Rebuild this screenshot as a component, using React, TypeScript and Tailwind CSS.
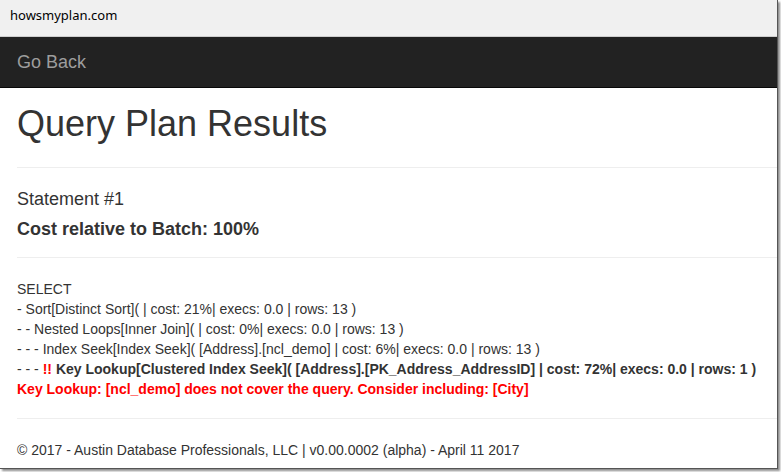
const rows = [
  "- Sort[Distinct Sort]( | cost: 21%| execs: 0.0 | rows: 13 )",
  "- - Nested Loops[Inner Join]( | cost: 0%| execs: 0.0 | rows: 13 )",
  "- - - Index Seek[Index Seek]( [Address].[ncl_demo] | cost: 6%| execs: 0.0 | rows: 13 )",
];

export default function App() {
  return (
    <div className="w-[781px] h-[472px] bg-white overflow-hidden">
      {/* page, with the screenshot drop shadow on right and bottom */}
      <div className="w-[778px] h-[469px] bg-white flex flex-col overflow-hidden border-r border-b border-[#555] shadow-[2px_2px_2px_rgba(0,0,0,0.45)] font-['Liberation_Sans',Arial,sans-serif] text-[#333]">
        {/* Address bar */}
        <div className="h-[37px] shrink-0 bg-[#f0f0f0] border-b border-[#cfcfcf] flex items-center pl-[10px] pb-[5px]">
          <span className="text-[13px] text-black font-['Noto_Sans','Open_Sans',sans-serif]">howsmyplan.com</span>
        </div>

        {/* Navbar */}
        <nav className="h-[51px] shrink-0 bg-[#222] border-b border-[#080808] flex items-center pl-[17px]">
          <span className="text-[18px] text-[#9d9d9d] leading-none">Go Back</span>
        </nav>

        {/* Body */}
        <main className="pl-[17px] flex flex-col">
          <h1 className="text-[36px] leading-[40px] mt-[16px] mb-[23px] font-normal text-[#333]">Query Plan Results</h1>
          <hr className="border-t border-[#eee]" />

          <h4 className="text-[18px] leading-[20px] mt-[21px] text-[#333]">Statement #1</h4>
          <p className="text-[18px] leading-[20px] mt-[10px] font-bold">Cost relative to Batch: 100%</p>
          <hr className="border-t border-[#eee] mt-[18px]" />

          <div className="text-[14px] leading-[20px] mt-[21px]">
            <div>SELECT</div>
            {rows.map((r) => (
              <div key={r}>{r}</div>
            ))}
            <div>
              - - - <span className="font-bold text-[#f00]">!!</span>{" "}
              <span className="font-bold">
                Key Lookup[Clustered Index Seek]( [Address].[PK_Address_AddressID] | cost: 72%| execs: 0.0 | rows: 1 )
              </span>
            </div>
            <div className="font-bold text-[#f00]">
              Key Lookup: [ncl_demo] does not cover the query. Consider including: [City]
            </div>
          </div>

          <hr className="border-t border-[#eee] mt-[19px]" />
          <footer className="text-[14px] leading-[20px] mt-[21px]">
            © 2017 - Austin Database Professionals, LLC | v0.00.0002 (alpha) - April 11 2017
          </footer>
        </main>
      </div>
    </div>
  );
}
